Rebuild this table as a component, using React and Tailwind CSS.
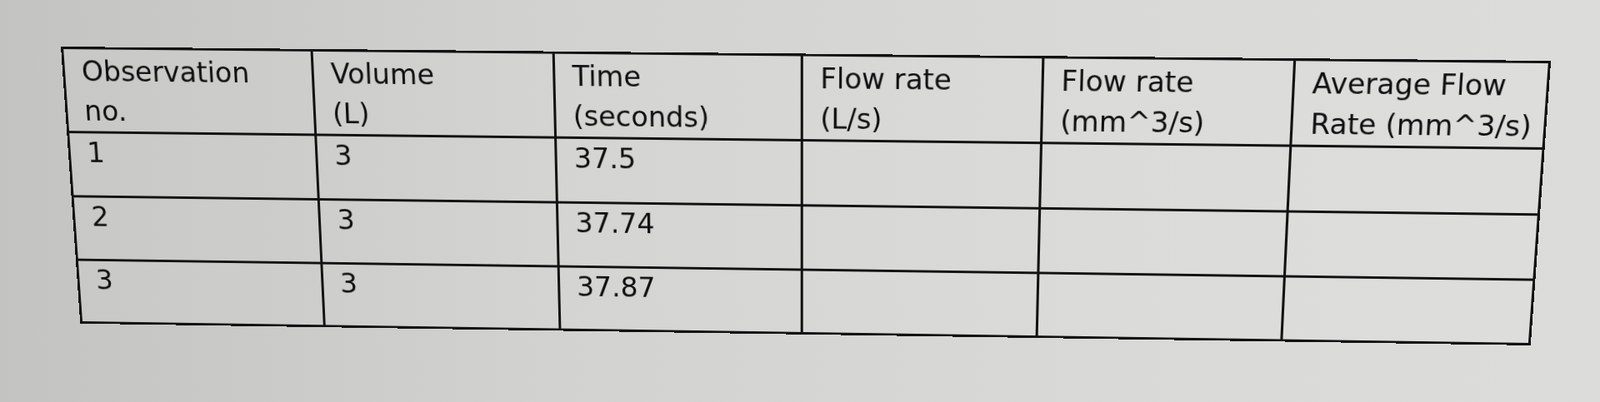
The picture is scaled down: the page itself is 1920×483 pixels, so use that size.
export default function App() {
  const cols = [298, 286, 291, 280, 289, 290];
  const header = [
    ["Observation", "no."],
    ["Volume", "(L)"],
    ["Time", "(seconds)"],
    ["Flow rate", "(L/s)"],
    ["Flow rate", "(mm^3/s)"],
    ["Average Flow", "Rate (mm^3/s)"],
  ];
  const rows = [
    { h: "h-[79px]", cells: ["1", "3", "37.5", "", "", ""] },
    { h: "h-[79px]", cells: ["2", "3", "37.74", "", "", ""] },
    { h: "h-[79px]", cells: ["3", "3", "37.87", "", "", ""] },
  ];
  return (
    <div className="w-full h-[483px] overflow-hidden bg-[linear-gradient(90deg,#c3c3c1_0%,#d2d2d0_35%,#d9d9d7_70%,#dcdcda_100%)] pt-[56px] pl-[73px] font-['DejaVu_Sans',sans-serif] text-[#0f0f0f]">
      <table className="w-[1734px] table-fixed border-collapse origin-top-left bg-white/5 [transform:matrix3d(0.99989,0.009523,0,-0.000016538,0.069861,0.99931,0,0.000078837,0,0,1,0,0,0,0,1)]">
        <colgroup>
          {cols.map((w, i) => (
            <col key={i} style={{ width: w }} />
          ))}
        </colgroup>
        <thead>
          <tr className="h-[100px]">
            {header.map((h, i) => (
              <th
                key={i}
                className="border-[3px] border-[#121212] align-top text-left font-normal text-[33px] leading-[48px] pl-[20px] pt-[3px] pb-0 whitespace-nowrap"
              >
                <span className="block">{h[0]}</span>
                <span className="block">{h[1]}</span>
              </th>
            ))}
          </tr>
        </thead>
        <tbody>
          {rows.map((r, ri) => (
            <tr key={ri} className={r.h}>
              {r.cells.map((c, ci) => (
                <td
                  key={ci}
                  className="border-[3px] border-[#121212] align-top text-left text-[33px] leading-[48px] pl-[20px] pt-0"
                >
                  {c}
                </td>
              ))}
            </tr>
          ))}
        </tbody>
      </table>
    </div>
  );
}
